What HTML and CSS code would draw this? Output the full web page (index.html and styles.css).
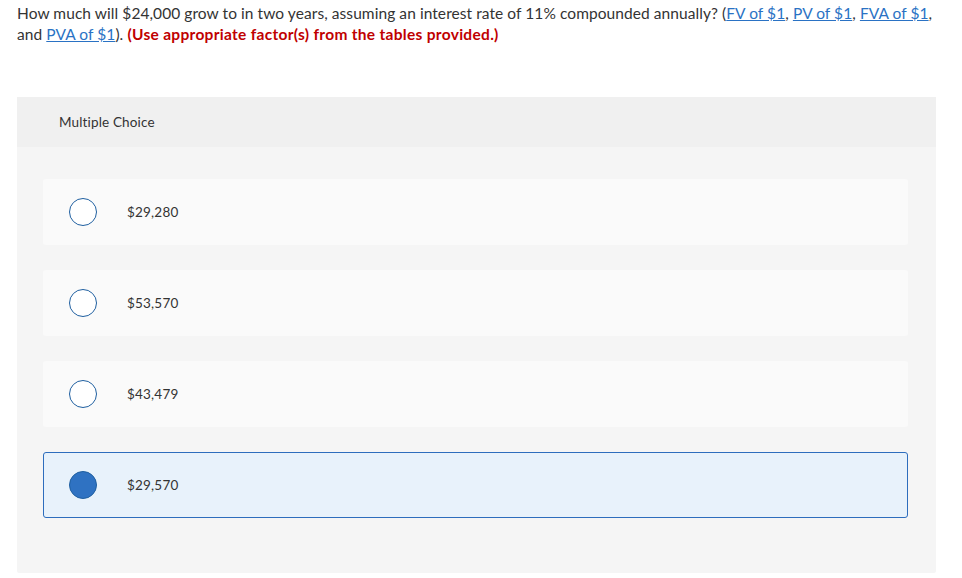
FILE: index.html
```html
<!DOCTYPE html>
<html>
<head>
<meta charset="utf-8">
<link rel="stylesheet" href="styles.css">
</head>
<body>
<div class="page">
  <p class="question">How much will $24,000 grow to in two years, assuming an interest rate of 11% compounded annually? (<a href="#">FV of $1</a>, <a href="#">PV of $1</a>, <a href="#">FVA of $1</a>, and <a href="#">PVA of $1</a>). <strong class="note">(Use appropriate factor(s) from the tables provided.)</strong></p>
  <div class="panel">
    <div class="panel-head">Multiple Choice</div>
    <div class="choices">
      <div class="choice"><span class="radio"></span><span class="label">$29,280</span></div>
      <div class="choice"><span class="radio"></span><span class="label">$53,570</span></div>
      <div class="choice"><span class="radio"></span><span class="label">$43,479</span></div>
      <div class="choice selected"><span class="radio"></span><span class="label">$29,570</span></div>
    </div>
  </div>
</div>
</body>
</html>
```
FILE: styles.css
```css
html, body {
  margin: 0;
  padding: 0;
  background: #ffffff;
}
body {
  font-family: "Lato", "Open Sans", sans-serif;
  color: #333333;
}
.page {
  padding: 3px 26px 0 17px;
}
.question {
  margin: 0;
  font-size: 15.5px;
  letter-spacing: 0.07px;
  line-height: 21px;
  color: #333333;
}
.question a {
  color: #2a72c4;
  text-decoration: underline;
}
.note {
  color: #c00000;
  font-weight: 700;
  letter-spacing: 0.3px;
}
.panel {
  margin-top: 52px;
  width: 919px;
  background: #f5f5f5;
  border-radius: 2px;
}
.panel-head {
  height: 50px;
  background: #f0f0f0;
  display: flex;
  align-items: center;
  padding-left: 42px;
  font-size: 13.5px;
  letter-spacing: 0.15px;
  color: #333333;
}
.choices {
  display: flex;
  flex-direction: column;
  gap: 25px;
  padding: 32px 28px 55px 26px;
}
.choice {
  height: 66px;
  box-sizing: border-box;
  background: #fafafa;
  border-radius: 3px;
  display: flex;
  align-items: center;
  padding-left: 25px;
  border: 1px solid transparent;
}
.radio {
  width: 26px;
  height: 26px;
  border-radius: 50%;
  border: 1px solid #1f5fa0;
  background: #ffffff;
  flex: none;
}
.label {
  margin-left: 30px;
  font-size: 13.5px;
  letter-spacing: 0.2px;
  color: #333333;
}
.choice.selected {
  background: #e8f2fb;
  border: 1px solid #2d6dbd;
}
.choice.selected .radio {
  background: #2f72c2;
  border-color: #1f5fa0;
}
```
